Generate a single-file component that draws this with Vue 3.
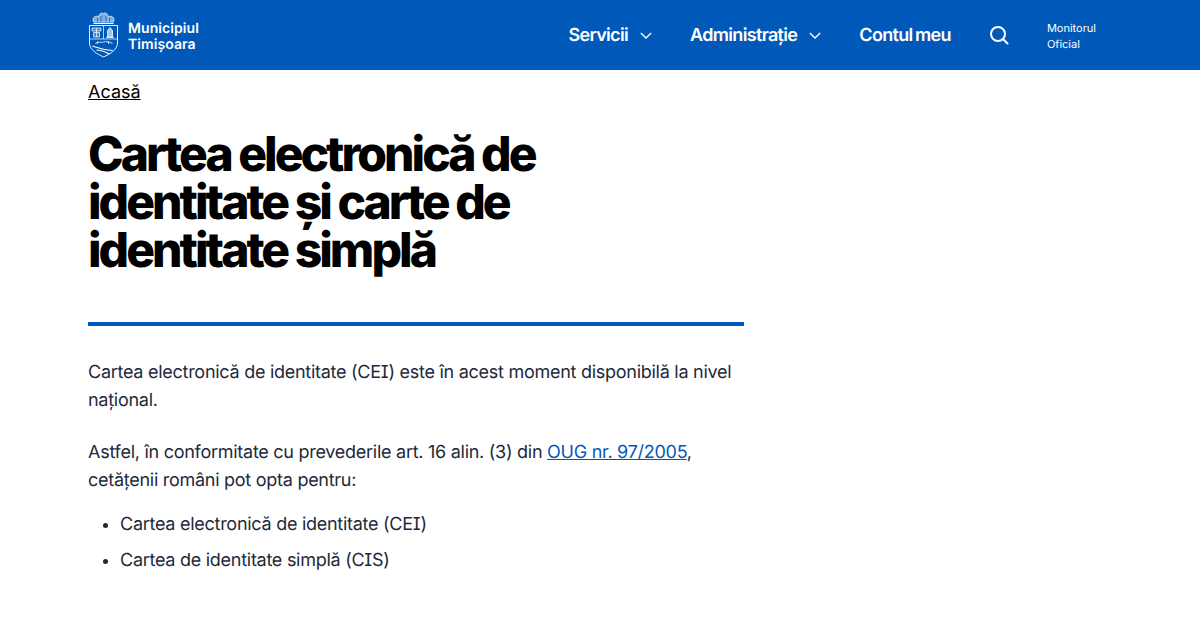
<template>
  <div class="page">
    <header class="topbar">
      <a class="brand" href="#">
        <svg class="crest" viewBox="0 0 30 46" fill="none" stroke="#fff">
          <path d="M5 10 C3 5 8 3 10 5 C11 1 14 0 15 2 C16 0 19 1 20 5 C22 3 27 5 25 10 Z" fill="#fff" fill-opacity=".5" stroke-width=".7" />
          <path d="M9 10 V6 M12.5 10 V4 M17.5 10 V4 M21 10 V6" stroke="#0059b8" stroke-width=".7" />
          <path d="M5 11.5 H25" stroke-width="1" />
          <path d="M1 13.5 H29 V31 C29 38 21 42 15 45 C9 42 1 38 1 31 Z" stroke-width=".9" />
          <path d="M1 27 H29 M15 13.5 V27" stroke-width=".7" />
          <path d="M3.5 16 H12.5 V19 H3.5 Z M5 20.5 H11 V25 H5 Z M8 16 V25" stroke-width=".7" fill="#fff" fill-opacity=".3" />
          <path d="M19 25 V18.5 L21.5 15.5 L24 18.5 V25 Z M17.5 25.5 H25.5" stroke-width=".8" fill="#fff" fill-opacity=".65" />
          <path d="M7 31.5 C10 29 13 31 15 30 C18 29 21 30 24 31.5 M9 29.5 V32 M20 29 V32" stroke-width=".8" />
          <path d="M4 34 C10 36 14 38 24 38.5 M8 38 C12 38 17 40 21 42" stroke-width="1.1" />
        </svg>
        <span class="brand-name">Municipiul<br />Timișoara</span>
      </a>
      <nav class="menu">
        <a v-for="item in menu" :key="item.label" class="menu-link" href="#">
          {{ item.label }}
          <svg v-if="item.caret" class="caret" viewBox="0 0 14 8" fill="none" stroke="#fff" stroke-width="1.5">
            <path d="M1 1 L7 7 L13 1" />
          </svg>
        </a>
        <svg class="search" viewBox="0 0 20 20" fill="none" stroke="#fff" stroke-width="2" stroke-linecap="round">
          <circle cx="9" cy="9" r="7" />
          <path d="M14.2 14.2 L18.5 18.5" />
        </svg>
        <a class="monitor" href="#">Monitorul<br />Oficial</a>
      </nav>
    </header>

    <main class="content">
      <a class="crumb" href="#">Acasă</a>
      <h1>Cartea electronică de identitate și carte de identitate simplă</h1>
      <hr />
      <p>Cartea electronică de identitate (CEI) este în acest moment disponibilă la nivel național.</p>
      <p>Astfel, în conformitate cu prevederile art. 16 alin. (3) din <a href="#">OUG nr. 97/2005</a>, cetățenii români pot opta pentru:</p>
      <ul>
        <li v-for="option in options" :key="option">{{ option }}</li>
      </ul>
    </main>
  </div>
</template>

<script setup>
const menu = [
  { label: 'Servicii', caret: true },
  { label: 'Administrație', caret: true },
  { label: 'Contul meu', caret: false },
]

const options = [
  'Cartea electronică de identitate (CEI)',
  'Cartea de identitate simplă (CIS)',
]
</script>

<style>
html,
body {
  margin: 0;
  background: #fff;
}
</style>

<style scoped>
.page {
  height: 630px;
  overflow: hidden;
  font-family: Inter, "Liberation Sans", sans-serif;
  font-feature-settings: "cv08";
  font-variation-settings: "opsz" 18;
  text-rendering: geometricPrecision;
}

.topbar {
  display: flex;
  align-items: center;
  justify-content: space-between;
  height: 70px;
  padding: 0 104px 0 88px;
  background: #0059b8;
  color: #fff;
}

.brand {
  display: flex;
  align-items: center;
  gap: 9px;
  color: #fff;
  text-decoration: none;
}

.crest {
  width: 31px;
  height: 46px;
}

.brand-name {
  padding-top: 3px;
  font-size: 14px;
  line-height: 16px;
  font-weight: 600;
  letter-spacing: 0.005em;
}

.menu {
  display: flex;
  align-items: center;
}

.menu-link {
  display: flex;
  align-items: center;
  gap: 12px;
  margin-right: 38px;
  padding-top: 1px;
  color: #fff;
  font-size: 18px;
  font-weight: 600;
  letter-spacing: -0.037em;
  word-spacing: -1.5px;
  text-decoration: none;
}

.caret {
  width: 12px;
  height: 7px;
}

.search {
  width: 20px;
  height: 20px;
}

.monitor {
  margin-left: 38px;
  padding-top: 2px;
  color: #fff;
  font-size: 11px;
  line-height: 16px;
  font-weight: 400;
  text-decoration: none;
}

.content {
  width: 656px;
  margin-left: 88px;
  padding-top: 11px;
  color: #1e293b;
  font-size: 18px;
  line-height: 28px;
  letter-spacing: -0.27px;
}

.crumb {
  display: block;
  width: fit-content;
  color: #000;
  line-height: 24px;
  letter-spacing: 0;
  text-decoration: underline;
}

h1 {
  width: 500px;
  margin: 25px 0 48px;
  color: #000;
  font-size: 48px;
  line-height: 48px;
  font-weight: 800;
  letter-spacing: -0.062em;
}

hr {
  height: 4px;
  margin: 0 0 33px;
  border: 0;
  background: #0059b8;
}

p {
  margin: 0 0 24px;
}

p a {
  color: #0059b8;
}

ul {
  margin: -8px 0 0;
  padding-left: 32px;
}

li {
  margin-bottom: 8px;
}
</style>
